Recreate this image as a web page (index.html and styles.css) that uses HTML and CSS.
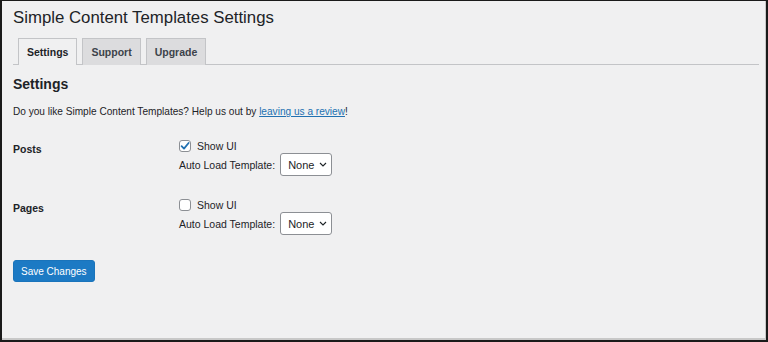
FILE: index.html
```html
<!DOCTYPE html>
<html lang="en">
<head>
    <meta charset="UTF-8">
    <meta name="viewport" content="width=device-width, initial-scale=1.0">
    <title>Simple Content Templates Settings</title>
    <link rel="stylesheet" href="styles.css">
</head>
<body>
    <div class="frame">
        <div class="wrap">
            <h1>Simple Content Templates Settings</h1>

            <nav class="tabs">
                <a class="tab active">Settings</a>
                <a class="tab">Support</a>
                <a class="tab">Upgrade</a>
            </nav>

            <h2>Settings</h2>
            <p class="intro">Do you like Simple Content Templates? Help us out by <a href="#" class="link">leaving us a review</a>!</p>

            <div class="form-row">
                <div class="row-label">Posts</div>
                <div class="row-fields">
                    <label class="check-line">
                        <span class="checkbox checked">
                            <svg width="10" height="10" viewBox="0 0 10 10"><path d="M1.6 5.2 L4 7.6 L8.6 2" fill="none" stroke="#2271b1" stroke-width="1.8" stroke-linecap="round" stroke-linejoin="round"/></svg>
                        </span>
                        Show UI
                    </label>
                    <div class="select-line">
                        <span>Auto Load Template:</span>
                        <span class="select">None
                            <svg width="8" height="5" viewBox="0 0 8 5"><path d="M1 1 L4 4 L7 1" fill="none" stroke="#1d2327" stroke-width="1.1"/></svg>
                        </span>
                    </div>
                </div>
            </div>

            <div class="form-row">
                <div class="row-label">Pages</div>
                <div class="row-fields">
                    <label class="check-line">
                        <span class="checkbox"></span>
                        Show UI
                    </label>
                    <div class="select-line">
                        <span>Auto Load Template:</span>
                        <span class="select">None
                            <svg width="8" height="5" viewBox="0 0 8 5"><path d="M1 1 L4 4 L7 1" fill="none" stroke="#1d2327" stroke-width="1.1"/></svg>
                        </span>
                    </div>
                </div>
            </div>

            <button class="save">Save Changes</button>
        </div>
    </div>
</body>
</html>
```

FILE: styles.css
```css
html, body {
    margin: 0;
    padding: 0;
}
body {
    font-family: "Liberation Sans", Arial, sans-serif;
    color: #1d2327;
    background: #1a1a1a;
}
.frame {
    box-sizing: border-box;
    width: 768px;
    height: 342px;
    border-top: 1px solid #1a1a1a;
    border-left: 2px solid #1a1a1a;
    border-right: 2px solid #1a1a1a;
    border-bottom: 2px solid #1a1a1a;
    background: #f0f0f1;
    box-shadow: inset -1px -2px 0 #c8c8c8;
}
.wrap {
    padding: 0 7px 0 11px;
}
h1 {
    font-size: 16.8px;
    font-weight: 400;
    line-height: 22px;
    margin: 0;
    padding-top: 6px;
    height: 31px;
}
.tabs {
    display: flex;
    gap: 5px;
    padding-left: 5px;
    border-bottom: 1px solid #c3c4c7;
    height: 26px;
}
.tab {
    box-sizing: border-box;
    height: 27px;
    padding: 0 8px;
    border: 1px solid #c3c4c7;
    border-bottom: none;
    background: #dcdcde;
    font-size: 10.5px;
    font-weight: 700;
    line-height: 26px;
    color: #3c434a;
}
.tab.active {
    background: #f0f0f1;
    color: #1d2327;
}
h2 {
    font-size: 14px;
    font-weight: 700;
    line-height: 18px;
    margin: 10px 0 0;
}
.intro {
    font-size: 10.1px;
    line-height: 14px;
    margin: 12px 0 0;
}
.link {
    color: #2271b1;
    text-decoration: underline;
}
.form-row {
    display: flex;
    margin-bottom: 23px;
}
.intro + .form-row {
    margin-top: 21px;
}
.row-label {
    width: 166px;
    font-size: 10.5px;
    font-weight: 700;
    padding-top: 3px;
}
.row-fields {
    font-size: 10.5px;
}
.check-line {
    display: flex;
    align-items: center;
    gap: 6px;
    height: 12px;
}
.checkbox {
    box-sizing: border-box;
    width: 12px;
    height: 12px;
    border: 1px solid #8c8f94;
    border-radius: 3px;
    background: #fff;
    display: flex;
    align-items: center;
    justify-content: center;
}
.select-line {
    display: flex;
    align-items: center;
    gap: 5px;
    margin-top: 1px;
}
.select {
    box-sizing: border-box;
    display: flex;
    align-items: center;
    gap: 5px;
    width: 52px;
    height: 23px;
    padding-left: 7px;
    border: 1px solid #8c8f94;
    border-radius: 3px;
    background: #fff;
    font-size: 11px;
}
.save {
    display: block;
    margin-top: 25px;
    height: 22px;
    padding: 0 7px;
    border: 1px solid #1a74bb;
    border-radius: 3px;
    background: #1c7ac4;
    color: #fff;
    font-family: "Liberation Sans", Arial, sans-serif;
    font-size: 10px;
}
```
